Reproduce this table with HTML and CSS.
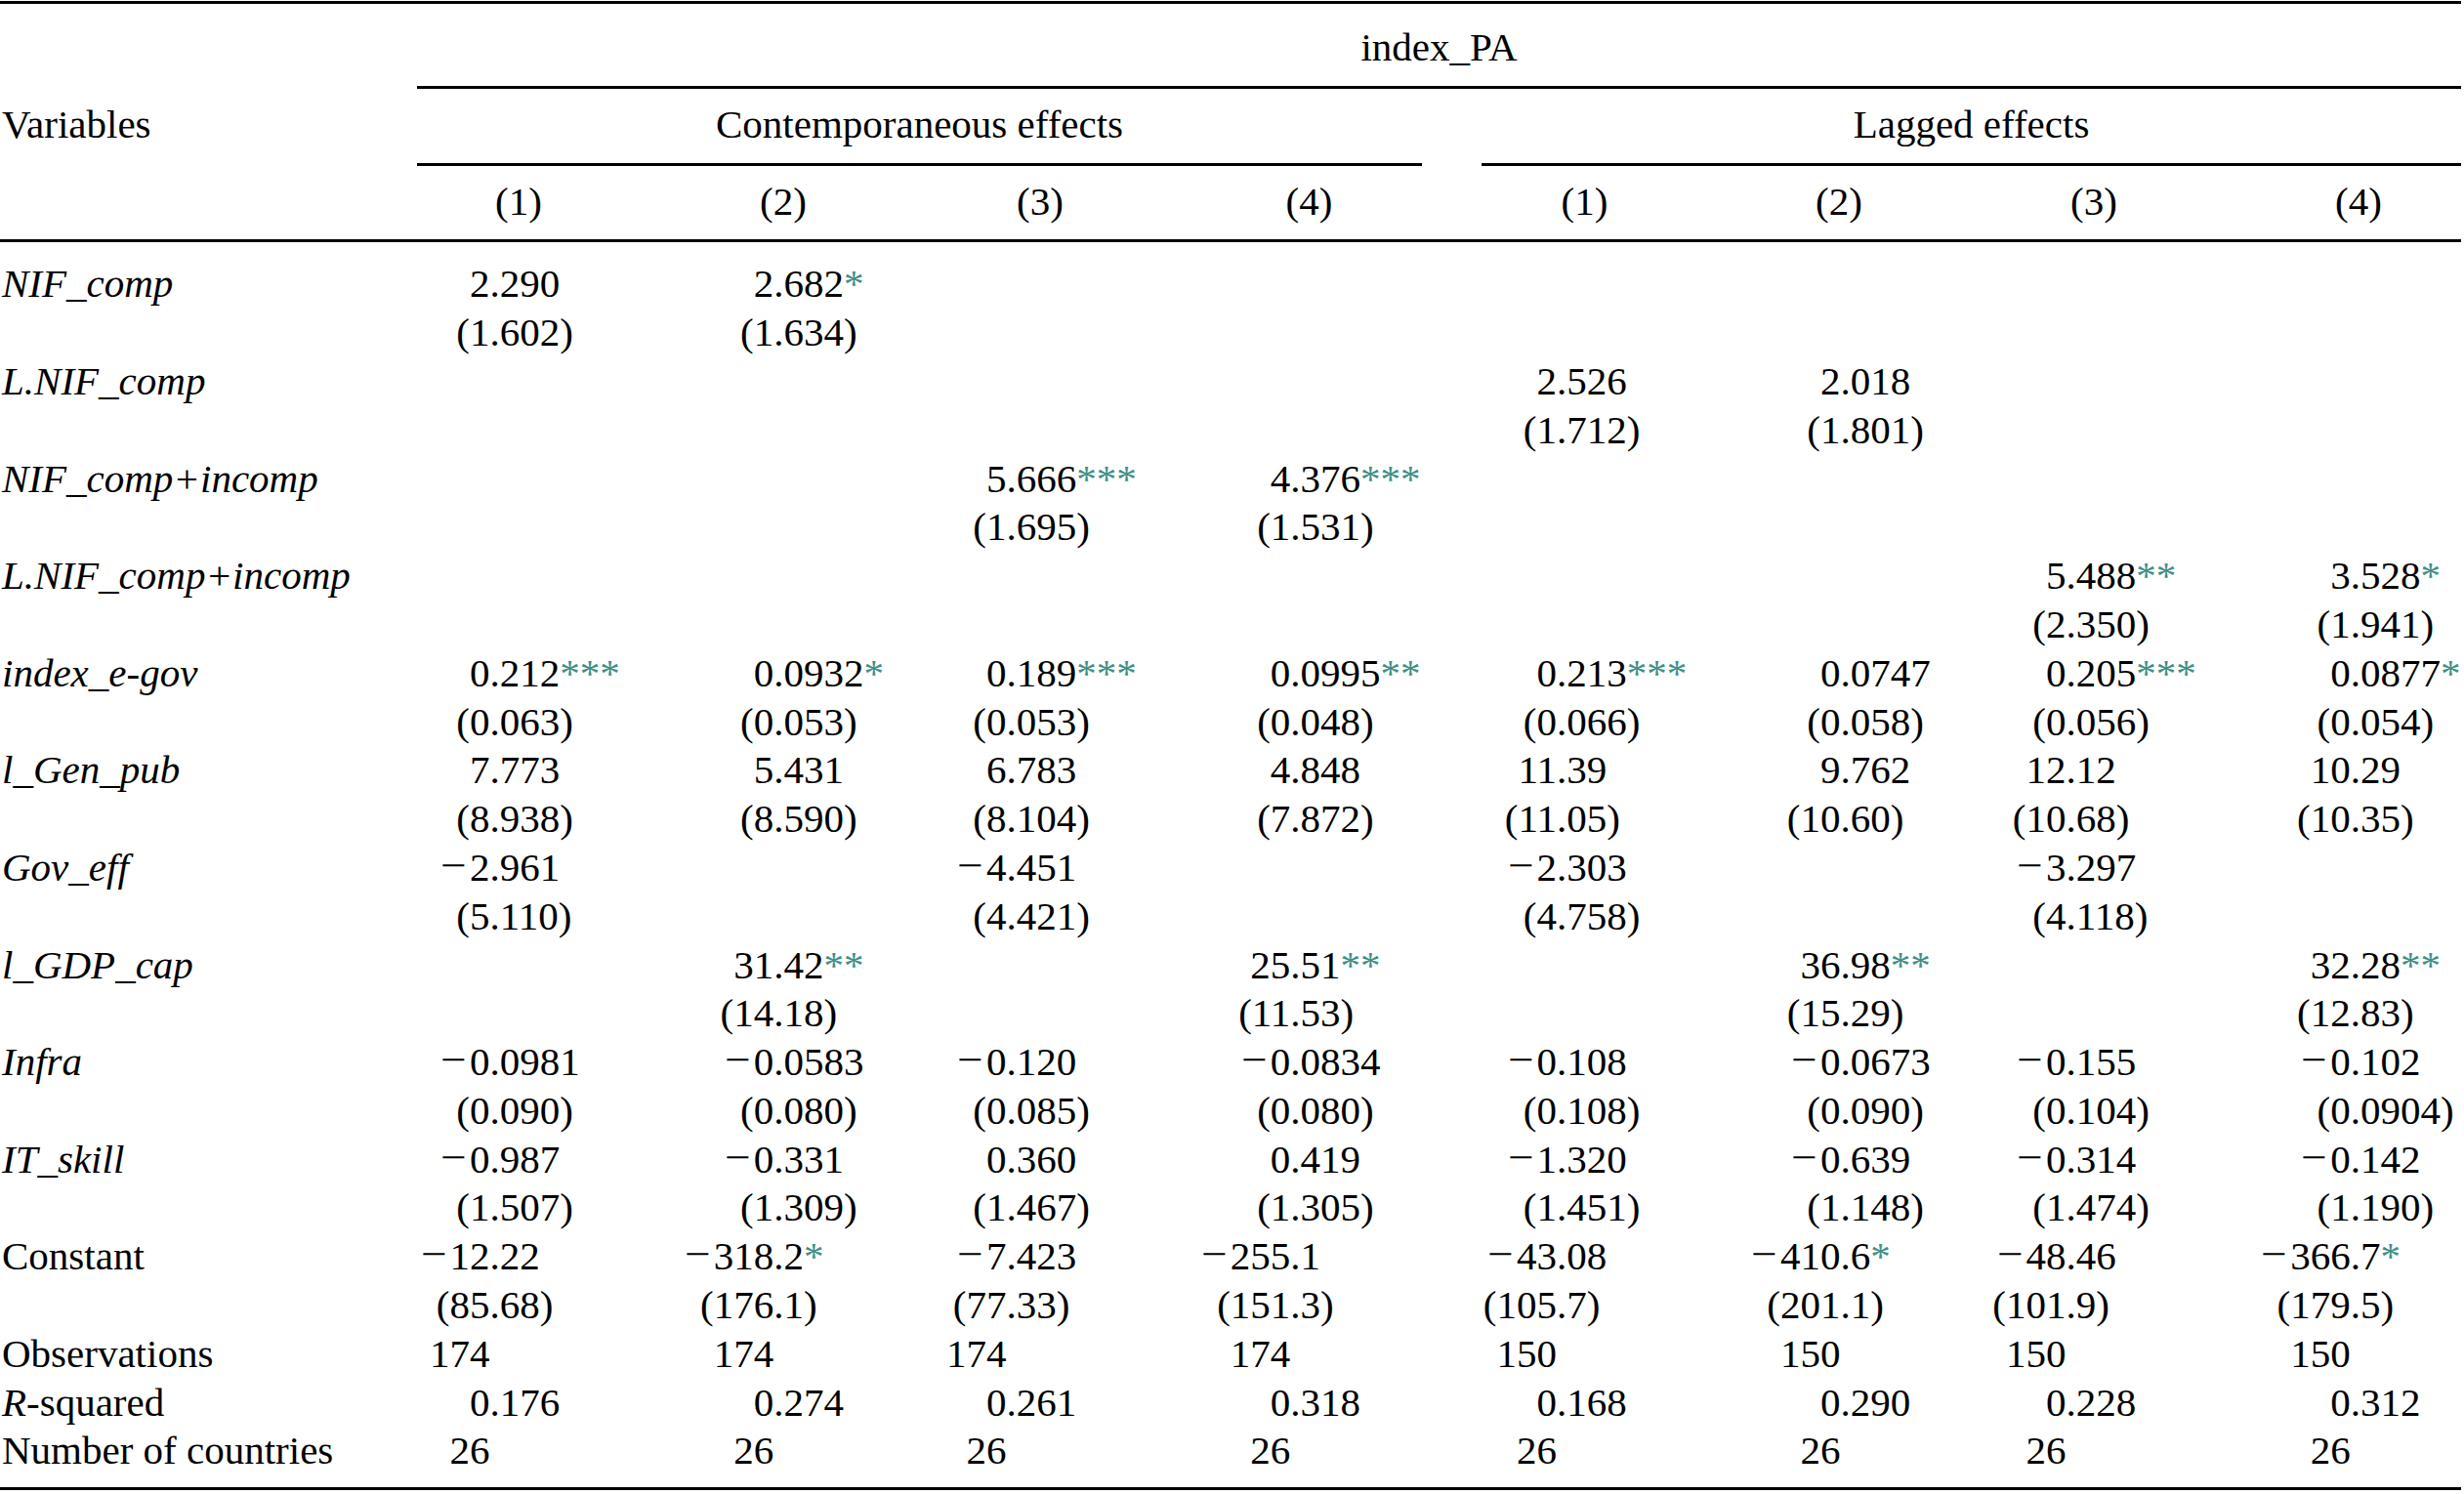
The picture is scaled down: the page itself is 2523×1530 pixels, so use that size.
FILE: index.html
```html
<!DOCTYPE html>
<html lang="en">
<head>
<meta charset="utf-8">
<title>index_PA regression table</title>
<link rel="stylesheet" href="styles.css">
</head>
<body>
<table class="reg">
  <colgroup>
    <col class="w-lab">
    <col class="w-a1"><col class="w-b1"><col class="w-a2"><col class="w-b2">
    <col class="w-a3"><col class="w-b3"><col class="w-a4"><col class="w-b4">
  </colgroup>
  <thead>
    <tr class="h1">
      <th></th>
      <th colspan="8"><div class="rule r-all">index_PA</div></th>
    </tr>
    <tr class="h2">
      <th class="lab">Variables</th>
      <th colspan="4"><div class="rule r-con">Contemporaneous effects</div></th>
      <th colspan="4"><div class="rule r-lag">Lagged effects</div></th>
    </tr>
    <tr class="h3">
      <th></th>
      <th>(1)</th><th>(2)</th><th>(3)</th><th>(4)</th>
      <th>(1)</th><th>(2)</th><th>(3)</th><th>(4)</th>
    </tr>
  </thead>
  <tbody>
    <tr class="first">
      <td class="v"><i>NIF_comp</i></td>
      <td><span class="i">2</span>.290</td>
      <td><span class="i">2</span>.682<span class="s">*</span></td>
      <td></td><td></td><td></td><td></td><td></td><td></td>
    </tr>
    <tr>
      <td></td>
      <td><span class="i">(1</span>.602)</td>
      <td><span class="i">(1</span>.634)</td>
      <td></td><td></td><td></td><td></td><td></td><td></td>
    </tr>
    <tr>
      <td class="v"><i>L.NIF_comp</i></td>
      <td></td><td></td><td></td><td></td>
      <td><span class="i">2</span>.526</td>
      <td><span class="i">2</span>.018</td>
      <td></td><td></td>
    </tr>
    <tr>
      <td></td>
      <td></td><td></td><td></td><td></td>
      <td><span class="i">(1</span>.712)</td>
      <td><span class="i">(1</span>.801)</td>
      <td></td><td></td>
    </tr>
    <tr>
      <td class="v"><i>NIF_comp+incomp</i></td>
      <td></td><td></td>
      <td><span class="i">5</span>.666<span class="s">***</span></td>
      <td><span class="i">4</span>.376<span class="s">***</span></td>
      <td></td><td></td><td></td><td></td>
    </tr>
    <tr>
      <td></td>
      <td></td><td></td>
      <td><span class="i">(1</span>.695)</td>
      <td><span class="i">(1</span>.531)</td>
      <td></td><td></td><td></td><td></td>
    </tr>
    <tr>
      <td class="v"><i>L.NIF_comp+incomp</i></td>
      <td></td><td></td><td></td><td></td><td></td><td></td>
      <td><span class="i">5</span>.488<span class="s">**</span></td>
      <td><span class="i">3</span>.528<span class="s">*</span></td>
    </tr>
    <tr>
      <td></td>
      <td></td><td></td><td></td><td></td><td></td><td></td>
      <td><span class="i">(2</span>.350)</td>
      <td><span class="i">(1</span>.941)</td>
    </tr>
    <tr>
      <td class="v"><i>index_e-gov</i></td>
      <td><span class="i">0</span>.212<span class="s">***</span></td>
      <td><span class="i">0</span>.0932<span class="s">*</span></td>
      <td><span class="i">0</span>.189<span class="s">***</span></td>
      <td><span class="i">0</span>.0995<span class="s">**</span></td>
      <td><span class="i">0</span>.213<span class="s">***</span></td>
      <td><span class="i">0</span>.0747</td>
      <td><span class="i">0</span>.205<span class="s">***</span></td>
      <td><span class="i">0</span>.0877<span class="s">*</span></td>
    </tr>
    <tr>
      <td></td>
      <td><span class="i">(0</span>.063)</td>
      <td><span class="i">(0</span>.053)</td>
      <td><span class="i">(0</span>.053)</td>
      <td><span class="i">(0</span>.048)</td>
      <td><span class="i">(0</span>.066)</td>
      <td><span class="i">(0</span>.058)</td>
      <td><span class="i">(0</span>.056)</td>
      <td><span class="i">(0</span>.054)</td>
    </tr>
    <tr>
      <td class="v"><i>l_Gen_pub</i></td>
      <td><span class="i">7</span>.773</td>
      <td><span class="i">5</span>.431</td>
      <td><span class="i">6</span>.783</td>
      <td><span class="i">4</span>.848</td>
      <td><span class="i">11</span>.39</td>
      <td><span class="i">9</span>.762</td>
      <td><span class="i">12</span>.12</td>
      <td><span class="i">10</span>.29</td>
    </tr>
    <tr>
      <td></td>
      <td><span class="i">(8</span>.938)</td>
      <td><span class="i">(8</span>.590)</td>
      <td><span class="i">(8</span>.104)</td>
      <td><span class="i">(7</span>.872)</td>
      <td><span class="i">(11</span>.05)</td>
      <td><span class="i">(10</span>.60)</td>
      <td><span class="i">(10</span>.68)</td>
      <td><span class="i">(10</span>.35)</td>
    </tr>
    <tr>
      <td class="v"><i>Gov_eff</i></td>
      <td><span class="i"><span class="m">−</span>2</span>.961</td>
      <td></td>
      <td><span class="i"><span class="m">−</span>4</span>.451</td>
      <td></td>
      <td><span class="i"><span class="m">−</span>2</span>.303</td>
      <td></td>
      <td><span class="i"><span class="m">−</span>3</span>.297</td>
      <td></td>
    </tr>
    <tr>
      <td></td>
      <td><span class="i">(5</span>.110)</td>
      <td></td>
      <td><span class="i">(4</span>.421)</td>
      <td></td>
      <td><span class="i">(4</span>.758)</td>
      <td></td>
      <td><span class="i">(4</span>.118)</td>
      <td></td>
    </tr>
    <tr>
      <td class="v"><i>l_GDP_cap</i></td>
      <td></td>
      <td><span class="i">31</span>.42<span class="s">**</span></td>
      <td></td>
      <td><span class="i">25</span>.51<span class="s">**</span></td>
      <td></td>
      <td><span class="i">36</span>.98<span class="s">**</span></td>
      <td></td>
      <td><span class="i">32</span>.28<span class="s">**</span></td>
    </tr>
    <tr>
      <td></td>
      <td></td>
      <td><span class="i">(14</span>.18)</td>
      <td></td>
      <td><span class="i">(11</span>.53)</td>
      <td></td>
      <td><span class="i">(15</span>.29)</td>
      <td></td>
      <td><span class="i">(12</span>.83)</td>
    </tr>
    <tr>
      <td class="v"><i>Infra</i></td>
      <td><span class="i"><span class="m">−</span>0</span>.0981</td>
      <td><span class="i"><span class="m">−</span>0</span>.0583</td>
      <td><span class="i"><span class="m">−</span>0</span>.120</td>
      <td><span class="i"><span class="m">−</span>0</span>.0834</td>
      <td><span class="i"><span class="m">−</span>0</span>.108</td>
      <td><span class="i"><span class="m">−</span>0</span>.0673</td>
      <td><span class="i"><span class="m">−</span>0</span>.155</td>
      <td><span class="i"><span class="m">−</span>0</span>.102</td>
    </tr>
    <tr>
      <td></td>
      <td><span class="i">(0</span>.090)</td>
      <td><span class="i">(0</span>.080)</td>
      <td><span class="i">(0</span>.085)</td>
      <td><span class="i">(0</span>.080)</td>
      <td><span class="i">(0</span>.108)</td>
      <td><span class="i">(0</span>.090)</td>
      <td><span class="i">(0</span>.104)</td>
      <td><span class="i">(0</span>.0904)</td>
    </tr>
    <tr>
      <td class="v"><i>IT_skill</i></td>
      <td><span class="i"><span class="m">−</span>0</span>.987</td>
      <td><span class="i"><span class="m">−</span>0</span>.331</td>
      <td><span class="i">0</span>.360</td>
      <td><span class="i">0</span>.419</td>
      <td><span class="i"><span class="m">−</span>1</span>.320</td>
      <td><span class="i"><span class="m">−</span>0</span>.639</td>
      <td><span class="i"><span class="m">−</span>0</span>.314</td>
      <td><span class="i"><span class="m">−</span>0</span>.142</td>
    </tr>
    <tr>
      <td></td>
      <td><span class="i">(1</span>.507)</td>
      <td><span class="i">(1</span>.309)</td>
      <td><span class="i">(1</span>.467)</td>
      <td><span class="i">(1</span>.305)</td>
      <td><span class="i">(1</span>.451)</td>
      <td><span class="i">(1</span>.148)</td>
      <td><span class="i">(1</span>.474)</td>
      <td><span class="i">(1</span>.190)</td>
    </tr>
    <tr>
      <td class="v">Constant</td>
      <td><span class="i"><span class="m">−</span>12</span>.22</td>
      <td><span class="i"><span class="m">−</span>318</span>.2<span class="s">*</span></td>
      <td><span class="i"><span class="m">−</span>7</span>.423</td>
      <td><span class="i"><span class="m">−</span>255</span>.1</td>
      <td><span class="i"><span class="m">−</span>43</span>.08</td>
      <td><span class="i"><span class="m">−</span>410</span>.6<span class="s">*</span></td>
      <td><span class="i"><span class="m">−</span>48</span>.46</td>
      <td><span class="i"><span class="m">−</span>366</span>.7<span class="s">*</span></td>
    </tr>
    <tr>
      <td></td>
      <td><span class="i">(85</span>.68)</td>
      <td><span class="i">(176</span>.1)</td>
      <td><span class="i">(77</span>.33)</td>
      <td><span class="i">(151</span>.3)</td>
      <td><span class="i">(105</span>.7)</td>
      <td><span class="i">(201</span>.1)</td>
      <td><span class="i">(101</span>.9)</td>
      <td><span class="i">(179</span>.5)</td>
    </tr>
    <tr>
      <td class="v">Observations</td>
      <td><span class="i">174</span></td>
      <td><span class="i">174</span></td>
      <td><span class="i">174</span></td>
      <td><span class="i">174</span></td>
      <td><span class="i">150</span></td>
      <td><span class="i">150</span></td>
      <td><span class="i">150</span></td>
      <td><span class="i">150</span></td>
    </tr>
    <tr>
      <td class="v"><i>R</i>-squared</td>
      <td><span class="i">0</span>.176</td>
      <td><span class="i">0</span>.274</td>
      <td><span class="i">0</span>.261</td>
      <td><span class="i">0</span>.318</td>
      <td><span class="i">0</span>.168</td>
      <td><span class="i">0</span>.290</td>
      <td><span class="i">0</span>.228</td>
      <td><span class="i">0</span>.312</td>
    </tr>
    <tr class="last">
      <td class="v">Number of countries</td>
      <td><span class="i">26</span></td>
      <td><span class="i">26</span></td>
      <td><span class="i">26</span></td>
      <td><span class="i">26</span></td>
      <td><span class="i">26</span></td>
      <td><span class="i">26</span></td>
      <td><span class="i">26</span></td>
      <td><span class="i">26</span></td>
    </tr>
  </tbody>
</table>
</body>
</html>
```

FILE: styles.css
```css
html, body {
  margin: 0;
  padding: 0;
  background: #fff;
}

body {
  padding-top: 1px;
  font-family: "Liberation Serif", "Times New Roman", serif;
  font-size: 41px;
  color: #000;
}

.reg {
  width: 2520px;
  table-layout: fixed;
  border-collapse: separate;
  border-spacing: 0;
  border-top: 3px solid #000;
  border-bottom: 3px solid #000;
}

.w-lab { width: 364px; }
.w-a1 { width: 334px; }
.w-b1 { width: 208px; }
.w-a2 { width: 318px; }
.w-b2 { width: 233px; }
.w-a3 { width: 331px; }
.w-b3 { width: 190px; }
.w-a4 { width: 332px; }
.w-b4 { width: 210px; }

.reg th,
.reg td {
  padding: 0;
  font-weight: normal;
  line-height: 49.86px;
  white-space: nowrap;
  text-align: left;
  vertical-align: top;
}

.reg tbody td {
  line-height: 49.8px;
}

/* header */
.rule {
  text-align: center;
  border-bottom: 3px solid #000;
}

.r-all {
  margin-left: 63px;
  padding: 19.6px 0 14.4px;
}

.h2 .lab {
  padding: 12.5px 0 0 2px;
}

.r-con {
  margin-left: 63px;
  margin-right: 1px;
  padding: 12.5px 0 13.6px;
}

.r-lag {
  margin-left: 60px;
  padding: 12.5px 0 13.6px;
}

.h3 th {
  text-align: center;
  padding: 11.8px 0 13.3px;
  border-bottom: 3px solid #000;
}

/* body */
.reg td.v {
  padding-left: 2px;
}

.first td {
  padding-top: 18.6px;
}

.last td {
  padding-bottom: 12px;
}

.reg td:nth-child(2) { --dp: 137.5px; }
.reg td:nth-child(3) { --dp: 94.2px; }
.reg td:nth-child(4) { --dp: 124.4px; }
.reg td:nth-child(5) { --dp: 97.3px; }
.reg td:nth-child(6) { --dp: 137px; }
.reg td:nth-child(7) { --dp: 96.5px; }
.reg td:nth-child(8) { --dp: 137.5px; }
.reg td:nth-child(9) { --dp: 96.7px; }

.i {
  display: inline-block;
  width: var(--dp);
  text-align: right;
}

.m {
  display: inline-block;
  width: 30px;
  text-align: left;
  transform: translateY(-2px) scaleX(1.15);
  transform-origin: 0 50%;
}

.s {
  color: #3f8f86;
}
```
